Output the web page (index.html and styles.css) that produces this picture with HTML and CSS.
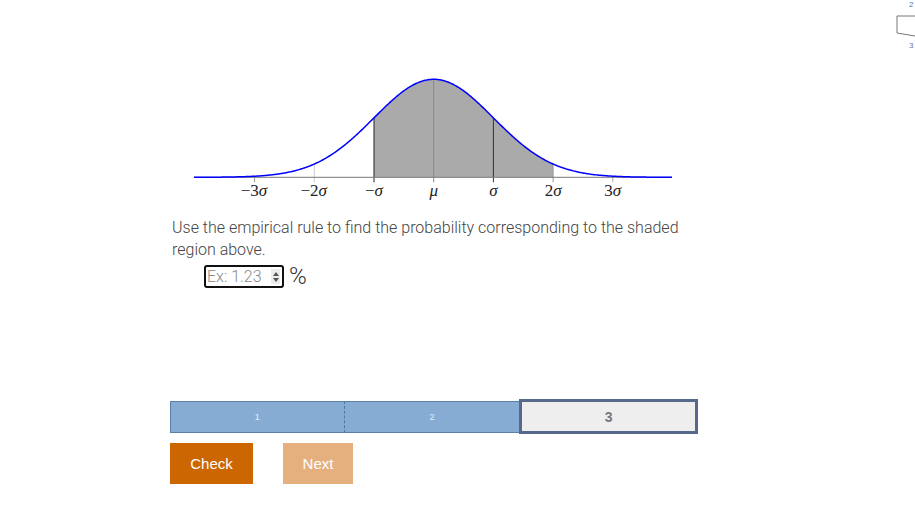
FILE: index.html
```html
<!DOCTYPE html>
<html>
<head>
<meta charset="utf-8">
<link rel="stylesheet" href="styles.css">
</head>
<body>
<div class="corner">
  <svg width="22" height="50" viewBox="0 0 22 50">
    <text x="16" y="7" class="corner-num">2</text>
    <path d="M22 16 L4 16 L4 33 L22 36" fill="none" stroke="#777" stroke-width="1"/>
    <text x="16" y="48" class="corner-num">3</text>
  </svg>
</div>
<main class="page">
  <svg class="chart" width="530" height="155" viewBox="0 0 530 155">
    <path id="shade" fill="#aaaaaa" stroke="none"/>
    <g id="ticks"></g>
    <line x1="24" y1="127.3" x2="502" y2="127.3" stroke="#777" stroke-width="1"/>
    <path id="curve" fill="none" stroke="#0000ff" stroke-width="1.5"/>
    <g class="labels">
      <text x="84" y="146">−3<tspan class="it">σ</tspan></text>
      <text x="143.7" y="146">−2<tspan class="it">σ</tspan></text>
      <text x="204" y="146">−<tspan class="it">σ</tspan></text>
      <text x="263.7" y="146" class="it">μ</text>
      <text x="323.4" y="146" class="it">σ</text>
      <text x="383.1" y="146">2<tspan class="it">σ</tspan></text>
      <text x="442.8" y="146">3<tspan class="it">σ</tspan></text>
    </g>
  </svg>
  <p class="question">Use the empirical rule to find the probability corresponding to the shaded region above.</p>
  <div class="answer-row">
    <div class="field">
      <input class="field-input" type="text" placeholder="Ex: 1.23">
      <span class="spinner"><span class="up"></span><span class="down"></span></span>
    </div>
    <span class="unit">%</span>
  </div>
  <div class="progress">
    <div class="seg seg-done seg-first">1</div>
    <div class="seg seg-done seg-second">2</div>
    <div class="seg seg-current">3</div>
  </div>
  <div class="buttons">
    <button class="btn btn-check">Check</button>
    <button class="btn btn-next">Next</button>
  </div>
</main>
<script src="script.js"></script>
</body>
</html>
```
FILE: styles.css
```css
* { box-sizing: border-box; }
html, body { margin: 0; padding: 0; background: #fff; }
body { font-family: Roboto, "Liberation Sans", sans-serif; width: 915px; height: 512px; overflow: hidden; }

.corner { position: absolute; right: 0; top: 0; width: 22px; height: 50px; }
.corner svg { display: block; }
.corner-num { font-family: "Liberation Sans", sans-serif; font-size: 8px; fill: #5b79b0; }

.page { padding: 50px 0 0 170px; width: 720px; }
.chart { display: block; }
.labels text { font-family: "Liberation Serif", "DejaVu Serif", serif; font-size: 17px; fill: #222; text-anchor: middle; }
.labels .it { font-style: italic; }

.question {
  margin: 12px 0 0 2px;
  width: 515px;
  font-size: 16px;
  font-weight: 300;
  line-height: 22px;
  color: #444;
}

.answer-row { display: flex; align-items: center; margin: 4px 0 0 34px; height: 23px; }
.field {
  display: flex; align-items: center;
  width: 80px; height: 23px;
  border: 2px solid #111; border-radius: 3px;
  background: #fff;
  padding: 0 2px 0 1px;
}
.field-input {
  border: 0; outline: none; padding: 0; margin: 0;
  width: 64px; height: 19px;
  font-family: Roboto, sans-serif; font-size: 16px; font-weight: 300;
  color: #333; background: transparent;
}
.field-input::placeholder { color: #8a8a8a; }
.spinner {
  display: flex; flex-direction: column; align-items: center; justify-content: center; gap: 2px;
  width: 9px; height: 15px; background: #ececec; margin-left: auto;
}
.spinner .up { width: 0; height: 0; border-left: 3px solid transparent; border-right: 3px solid transparent; border-bottom: 4px solid #555; }
.spinner .down { width: 0; height: 0; border-left: 3px solid transparent; border-right: 3px solid transparent; border-top: 4px solid #555; }
.unit { margin-left: 5px; font-size: 24px; font-weight: 300; color: #333; line-height: 23px; }

.progress { display: flex; align-items: center; margin-top: 111px; width: 528px; height: 35px; }
.seg { display: flex; align-items: center; justify-content: center; }
.seg-done {
  height: 32px; width: 175px;
  background: #87acd3;
  border-top: 1px solid #5b80a9; border-bottom: 1px solid #5b80a9;
  color: #e4ecf5; font-family: "Liberation Sans", sans-serif; font-size: 9px;
}
.seg-first { border-left: 1px solid #5b80a9; border-right: 1px dashed #4f77a3; }
.seg-second { width: 175px; }
.seg-current {
  height: 35px; width: 179px;
  background: #eeeeee;
  border: 3px solid #56698d;
  color: #777; font-family: "Liberation Sans", sans-serif; font-size: 14px; font-weight: bold;
}

.buttons { display: flex; gap: 30px; margin-top: 9px; }
.btn {
  border: 0; margin: 0; height: 41px; padding: 0;
  font-family: "Liberation Sans", Arial, sans-serif; font-size: 15px; color: #fff;
}
.btn-check { width: 83px; background: #cc6600; }
.btn-next { width: 70px; background: #e5b07e; }
```
FILE: script.js
```js
(function () {
  var cx = 263.7, s = 59.7, base = 127.3, h = 98;
  function y(x) { var t = (x - cx) / s; return base - h * Math.exp(-0.5 * t * t); }
  var d = '';
  for (var x = 24; x <= 502; x += 1) { d += (d ? ' L' : 'M') + x + ' ' + y(x).toFixed(2); }
  document.getElementById('curve').setAttribute('d', d);
  var x0 = cx - s, x1 = cx + 2 * s;
  var f = 'M' + x0 + ' ' + base;
  for (var xx = x0; xx <= x1; xx += 1) { f += ' L' + xx.toFixed(2) + ' ' + y(xx).toFixed(2); }
  f += ' L' + x1 + ' ' + y(x1).toFixed(2) + ' L' + x1 + ' ' + base + ' Z';
  document.getElementById('shade').setAttribute('d', f);
  var ticks = [[-3, '#999'], [-2, '#ccc'], [-1, '#222'], [0, '#888'], [1, '#333'], [2, '#999'], [3, '#aaa']];
  var g = document.getElementById('ticks');
  ticks.forEach(function (tk) {
    var tx = cx + tk[0] * s;
    var l = document.createElementNS('http://www.w3.org/2000/svg', 'line');
    l.setAttribute('x1', tx); l.setAttribute('x2', tx);
    l.setAttribute('y1', y(tx)); l.setAttribute('y2', base + 5);
    l.setAttribute('stroke', tk[1]); l.setAttribute('stroke-width', '1');
    g.appendChild(l);
  });
})();
```
